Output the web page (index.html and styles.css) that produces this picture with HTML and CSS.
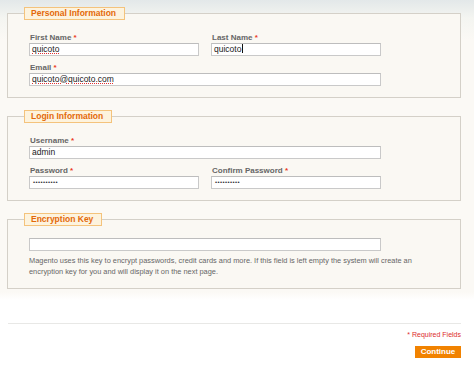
FILE: index.html
```html
<!DOCTYPE html>
<html>
<head>
<meta charset="utf-8">
<link rel="stylesheet" href="styles.css">
</head>
<body>
<div class="page">
  <fieldset class="box">
    <legend class="box-title">Personal Information</legend>
    <div class="row two">
      <div class="field">
        <label class="lbl">First Name <span class="req">*</span></label>
        <div class="inp"><span class="spell">quicoto</span></div>
      </div>
      <div class="field">
        <label class="lbl">Last Name <span class="req">*</span></label>
        <div class="inp">quicoto<span class="caret"></span></div>
      </div>
    </div>
    <div class="row">
      <div class="field wide">
        <label class="lbl">Email <span class="req">*</span></label>
        <div class="inp"><span class="spell">quicoto@quicoto.com</span></div>
      </div>
    </div>
  </fieldset>

  <fieldset class="box">
    <legend class="box-title">Login Information</legend>
    <div class="row">
      <div class="field wide">
        <label class="lbl">Username <span class="req">*</span></label>
        <div class="inp">admin</div>
      </div>
    </div>
    <div class="row two">
      <div class="field">
        <label class="lbl">Password <span class="req">*</span></label>
        <div class="inp dots">••••••••••</div>
      </div>
      <div class="field">
        <label class="lbl">Confirm Password <span class="req">*</span></label>
        <div class="inp dots">••••••••••</div>
      </div>
    </div>
  </fieldset>

  <fieldset class="box">
    <legend class="box-title">Encryption Key</legend>
    <div class="row">
      <div class="field wide">
        <div class="inp"></div>
        <p class="note">Magento uses this key to encrypt passwords, credit cards and more. If this field is left empty the system will create an encryption key for you and will display it on the next page.</p>
      </div>
    </div>
  </fieldset>

  <div class="actions">
    <p class="required">* Required Fields</p>
    <button class="btn" type="button">Continue</button>
  </div>
</div>
</body>
</html>
```

FILE: styles.css
```css
html, body {
  margin: 0;
  padding: 0;
}
body {
  width: 474px;
  height: 376px;
  overflow: hidden;
  font-family: "Liberation Sans", Arial, Helvetica, sans-serif;
  background: linear-gradient(to bottom, #e3e8e9 0px, #f4f5f1 18px, #fbf9f5 40px, #fbf9f5 292px, #ffffff 300px, #ffffff 100%);
}
.page {
  padding: 7px 13px 0 7px;
  display: flex;
  flex-direction: column;
}
.box {
  margin: 0 0 12px 0;
  padding: 12px 21px 11px 21px;
  border: 1px solid #d4d0c8;
  background: #faf8f3;
  min-width: 0;
}
.box-title {
  margin-left: -5px;
  padding: 0 8px 0 6px;
  height: 11px;
  line-height: 11px;
  border: 1px solid #f4c37c;
  background: #fdf3de;
  color: #e3690a;
  font-weight: bold;
  font-size: 8.5px;
}
.row {
  display: flex;
  gap: 12px;
}
.row + .row {
  margin-top: 6px;
}
.field {
  width: 170px;
  display: flex;
  flex-direction: column;
}
.field.wide {
  width: 352px;
}
.lbl {
  display: block;
  height: 11px;
  line-height: 11px;
  font-size: 8px;
  font-weight: bold;
  color: #666666;
  padding-left: 1px;
}
.req {
  color: #eb3a1e;
}
.inp {
  box-sizing: border-box;
  height: 13px;
  border: 1px solid #c9c9c9;
  border-top-color: #bdbdbd;
  background: #ffffff;
  font-size: 8.5px;
  line-height: 11px;
  color: #222222;
  padding-left: 2px;
  white-space: nowrap;
  overflow: hidden;
}
.spell {
  text-decoration: underline dotted #e03030;
  text-decoration-thickness: 1px;
  text-underline-offset: 1px;
}
.caret {
  display: inline-block;
  width: 1px;
  height: 9px;
  background: #111;
  vertical-align: -1px;
  margin-left: 0.5px;
}
.dots {
  font-size: 6px;
  letter-spacing: 0.4px;
  color: #333;
  padding-left: 3px;
}
.note {
  margin: 4px 0 0 0;
  font-size: 7.4px;
  line-height: 11px;
  color: #666666;
  width: 392px;
}
.actions {
  margin-top: 22px;
  border-top: 1px solid #e8e8e6;
  margin-left: 1px;
  display: flex;
  flex-direction: column;
  align-items: flex-end;
}
.required {
  margin: 6px 0 0 0;
  font-size: 7px;
  line-height: 10px;
  color: #dd2c2c;
}
.btn {
  margin-top: 6px;
  width: 46px;
  height: 12px;
  padding: 0;
  border: 0;
  background: #f18200;
  color: #ffffff;
  font-family: "Liberation Sans", Arial, sans-serif;
  font-weight: bold;
  font-size: 8px;
  line-height: 12px;
}
```
